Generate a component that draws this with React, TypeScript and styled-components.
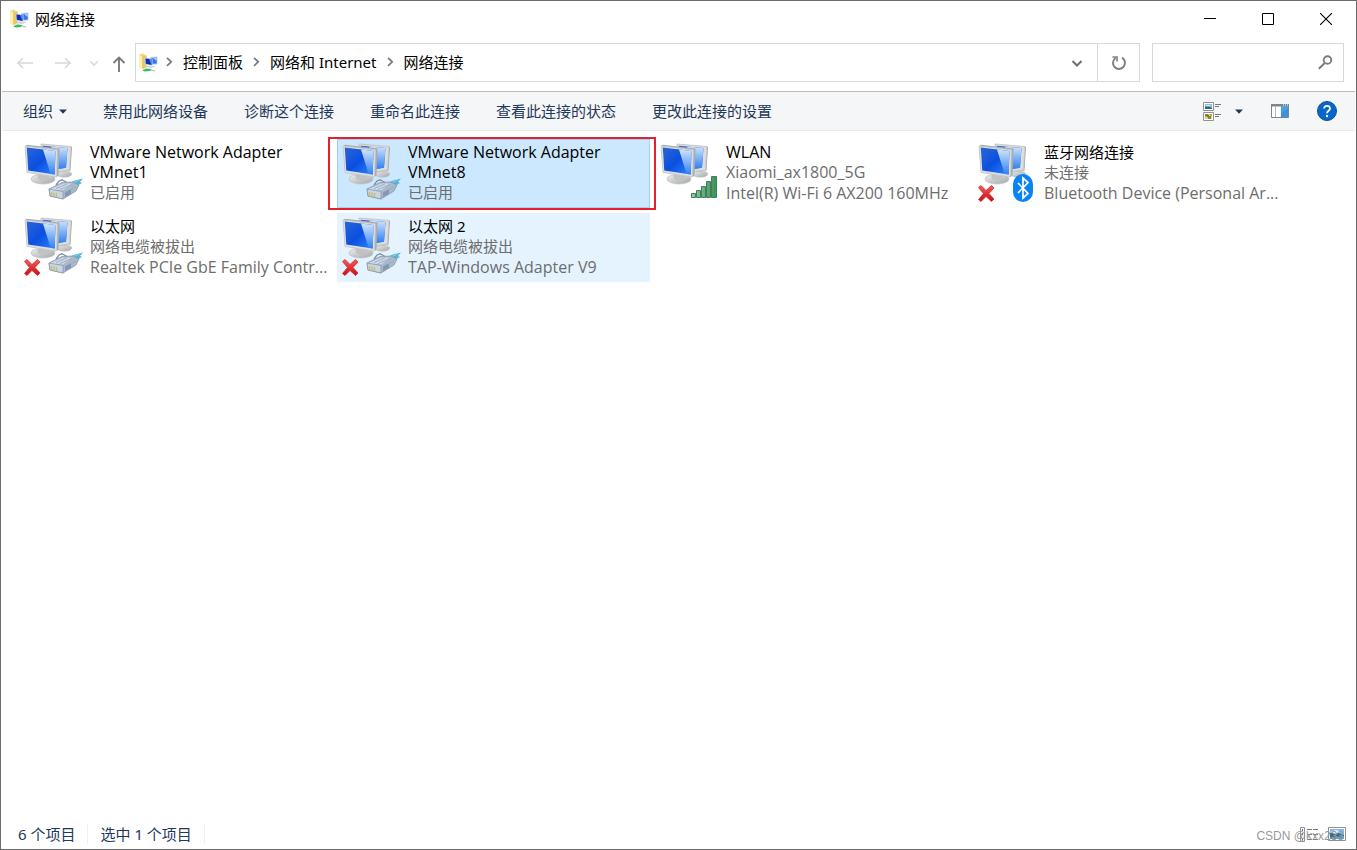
import React from "react";
import styled, { createGlobalStyle, css } from "styled-components";

const GlobalStyle = createGlobalStyle`
  *, *::before, *::after { box-sizing: border-box; }
  body { margin: 0; background: #fff; }
  body, button, input {
    font-family: "Noto Sans", "Noto Sans CJK SC", sans-serif;
    font-size: 15px;
    line-height: 20px;
  }
  svg { display: block; flex: none; }
`;

const plainButton = css`
  display: flex;
  align-items: center;
  justify-content: center;
  padding: 0;
  border: 0;
  background: none;
  color: inherit;
`;

const Window = styled.div`
  display: flex;
  flex-direction: column;
  min-height: 100vh;
  border: 1px solid #6b6b6b;
  background: #fff;
  color: #000;
`;

const TitleBar = styled.header`
  display: flex;
  align-items: stretch;
  height: 36px;
  padding: 0 1px 0 8px;
`;

const Title = styled.h1`
  display: flex;
  flex: 1;
  align-items: center;
  gap: 6px;
  margin: 0;
  font-size: 15px;
  font-weight: 400;
`;

const CaptionButton = styled.button`
  ${plainButton}
  width: 58px;
`;

const NavRow = styled.div`
  display: flex;
  align-items: stretch;
  height: 54px;
  padding: 6px 12px 9px 5px;
`;

const NavButton = styled.button<{ $width: number }>`
  ${plainButton}
  align-self: stretch;
  width: ${(p) => p.$width}px;
  color: #6f6f6f;
  &:disabled { color: #d9d9d9; }
`;

const AddressBar = styled.nav`
  display: flex;
  flex: 1;
  align-items: center;
  margin: 0 12px 0 3px;
  padding-left: 2px;
  border: 1px solid #d9d9d9;
`;

const Crumbs = styled.ol`
  display: flex;
  flex: 1;
  align-items: center;
  margin: 0;
  padding: 0 0 2px;
  list-style: none;
`;

const Crumb = styled.li`
  display: flex;
  align-items: center;
  svg { margin: 0 10px; }
  &:first-child svg { margin-left: 8px; }
`;

const CrumbLink = styled.a`
  color: #000;
  text-decoration: none;
`;

const RefreshButton = styled.button`
  ${plainButton}
  align-self: stretch;
  width: 42px;
  border-left: 1px solid #d9d9d9;
`;

const SearchBox = styled.label`
  display: flex;
  align-items: center;
  width: 192px;
  padding: 0 10px 0 8px;
  border: 1px solid #d9d9d9;
`;

const SearchInput = styled.input`
  flex: 1;
  min-width: 0;
  padding: 0;
  border: 0;
  outline: 0;
  background: none;
`;

const Toolbar = styled.div`
  display: flex;
  align-items: center;
  gap: 36px;
  height: 40px;
  margin: 0 1px;
  padding: 0 18px 0 21px;
  border-top: 1px solid #b9bcc0;
  border-bottom: 1px solid #e8eaec;
  background: #f5f6f7;
  color: #1e395b;
`;

const Command = styled.button`
  ${plainButton}
  gap: 6px;
`;

const ToolbarTools = styled.div`
  display: flex;
  align-items: center;
  gap: 28px;
  margin-left: auto;
`;

const ViewButton = styled.button`
  ${plainButton}
  gap: 13px;
`;

const IconButton = styled.button`
  ${plainButton}
`;

const Content = styled.main`
  flex: 1;
  padding: 8px 18px;
`;

const AdapterGrid = styled.ul`
  display: grid;
  grid-template-columns: repeat(auto-fill, 313px);
  gap: 5px;
  margin: 0;
  padding: 0;
  list-style: none;
`;

type ItemState = "normal" | "selected" | "hover";

const AdapterCell = styled.li`
  position: relative;
  display: flex;
`;

const AdapterTile = styled.button<{ $state: ItemState }>`
  ${plainButton}
  flex: 1;
  align-items: flex-start;
  justify-content: flex-start;
  gap: 6px;
  min-width: 0;
  height: 69px;
  text-align: left;
  background: ${(p) =>
    p.$state === "selected" ? "#cce8ff" : p.$state === "hover" ? "#e5f3ff" : "transparent"};
  box-shadow: ${(p) => (p.$state === "selected" ? "inset 0 0 0 1px #99d1ff" : "none")};
`;

const Highlight = styled.span`
  position: absolute;
  inset: -2px -6px -2px -9px;
  border: 2px solid #e3202b;
  pointer-events: none;
`;

const AdapterText = styled.span`
  display: flex;
  flex-direction: column;
  width: 232px;
  padding-top: 3px;
`;

const latinText = css`
  font-family: "Open Sans", "Noto Sans", sans-serif;
  font-size: 16px;
`;

const AdapterName = styled.span<{ $latin: boolean }>`
  line-height: 20px;
  ${(p) => p.$latin && latinText}
`;

const AdapterMeta = styled.span<{ $latin: boolean }>`
  color: #6d6d6d;
  line-height: 21px;
  white-space: nowrap;
  ${(p) => p.$latin && latinText}
`;

const StatusBar = styled.footer`
  display: flex;
  align-items: center;
  height: 30px;
  padding: 0 10px 0 17px;
  color: #1e395b;
`;

const StatusText = styled.span`
  margin-right: 12px;
  padding-right: 12px;
  border-right: 1px solid #f0f0f0;
`;

const ViewSwitch = styled.div`
  position: relative;
  display: flex;
  gap: 9px;
  margin-left: auto;
`;

const Watermark = styled.span`
  position: absolute;
  right: 2px;
  top: 0;
  color: #999;
  font-family: "Liberation Sans", Arial, sans-serif;
  font-size: 12px;
  line-height: 18px;
  white-space: nowrap;
`;

const FolderNetworkIcon = () => (
  <svg width="20" height="20" viewBox="0 0 20 20" aria-hidden="true">
    <path d="M1 2 4.500 .5 8.500 2.500V14L5.500 16 1 14z" fill="#f3d879" />
    <path d="M1 2 4 3.500V16L1 14z" fill="#fdf0b4" />
    <path d="M4 3.500 8.500 2.500V14L4.500 16z" fill="#e9c864" />
    <path d="M12 4 19.500 3.500V11.500L12 12z" fill="#c4d4e5" />
    <path d="M13 5 18.800 4.500V10.500L13 11z" fill="#3c73e8" />
    <path d="M15 5 18.800 4.500V8z" fill="#a7cbff" />
    <path d="M6.500 4.500 14.500 5.500V13L7 11.500z" fill="#c5d2e3" />
    <path d="M7.500 5.500 13.500 6.300V12L7.800 10.800z" fill="#0c2eb8" />
    <path d="M11 6 13.500 6.300V12z" fill="#4d93f5" />
    <path d="M8 12.500 14 13.500 16 12.500 17 13.500 13 15 7.500 14z" fill="#c8cdd2" />
    <path d="M4 17.500 8 15.500 13.500 16 12 18 7 18.500z" fill="#3bb86b" />
    <path d="M13 17 17 18" stroke="#9ebfae" strokeWidth="1" />
  </svg>
);

const ArrowIcon = ({ flip }: { flip?: boolean }) => (
  <svg width="16" height="12" viewBox="0 0 16 12" fill="none" stroke="currentColor" strokeWidth="1.6" aria-hidden="true">
    <path d={flip ? "M0 6h15M10 1l5 5-5 5" : "M16 6H1M6 1 1 6l5 5"} />
  </svg>
);

const UpIcon = () => (
  <svg width="14" height="18" viewBox="0 0 14 18" fill="none" stroke="#7a7a7a" strokeWidth="1.9" aria-hidden="true">
    <path d="M7 18V4M1.500 9 7 3.500 12.500 9" />
  </svg>
);

const DownChevron = ({ size, weight }: { size: number; weight: number }) => (
  <svg width={size} height={size} viewBox="0 0 12 12" fill="none" stroke="currentColor" strokeWidth={weight} aria-hidden="true">
    <path d="M1.500 4 6 8.500 10.500 4" />
  </svg>
);

const CrumbChevron = () => (
  <svg width="7" height="10" viewBox="0 0 7 10" fill="none" stroke="#777" strokeWidth="1.700" aria-hidden="true">
    <path d="M1 .8 5.200 4.800 1 8.800" />
  </svg>
);

const RefreshIcon = () => (
  <svg width="16" height="16" viewBox="0 0 16 16" fill="none" stroke="#808080" strokeWidth="2" aria-hidden="true">
    <path d="M11 2.700A6 6 0 1 1 4.500 3" />
    <path d="M1.500 2H6V6.500" strokeWidth="1.600" />
  </svg>
);

const SearchIcon = () => (
  <svg width="15" height="15" viewBox="0 0 15 15" fill="none" stroke="#7d7d7d" aria-hidden="true">
    <circle cx="9.500" cy="5" r="3.800" strokeWidth="1.900" />
    <path d="M6.800 8 .8 13.800" strokeWidth="2" />
  </svg>
);

const Caret = () => (
  <svg width="8" height="5" viewBox="0 0 8 5" aria-hidden="true">
    <path d="M0 .5h8L4 4.800z" fill="#1e395b" />
  </svg>
);

const TilesIcon = () => (
  <svg width="19" height="19" viewBox="0 0 19 19" aria-hidden="true">
    <path d="M.5.5h10v8H.5zM.5 10.500h10v8H.5z" fill="#fff" stroke="#929292" />
    <path d="M2 2h7v5H2z" fill="#87bdf0" />
    <path d="M2 4.500 5 4l4 2v1H2z" fill="#2e6875" />
    <path d="M2 3.500 6 3l2 .8-4 .8z" fill="#e8f4ff" />
    <path d="M2 12h7v5H2z" fill="#e0ca82" />
    <path d="M2 12h3v2.500H2zM5 14h3v3H5z" fill="#609a44" />
    <path d="M4 13h2v2H4z" fill="#c74d32" />
    <path d="M7 12h2v2H7z" fill="#e79b31" />
    <path d="M12 2.500h6M12 4.500h4M12 12.500h6M12 14.500h4" stroke="#777" />
  </svg>
);

const PreviewPaneIcon = () => (
  <svg width="18" height="14" viewBox="0 0 18 14" aria-hidden="true">
    <path d="M.5.500h17v13H.5z" fill="#fff" stroke="#7c858c" />
    <path d="M0 0h18v2.500H0z" fill="#7c858c" />
    <path d="M4.500 2.500v10.500" stroke="#b4b9bd" />
    <path d="M10 2h7v11h-7z" fill="#4da1e7" />
    <path d="M10 13V9l7-5v9z" fill="#3993df" />
    <path d="M12 1h1M14 1h1M16 1h1" stroke="#fff" />
  </svg>
);

const HelpIcon = () => (
  <svg width="20" height="20" viewBox="0 0 20 20" fill="none" aria-hidden="true">
    <circle cx="10" cy="10" r="9.500" fill="#0567cb" stroke="#164e87" />
    <path d="M7.200 7.600C7.200 4 13 4 13 7.500 13 9.800 10 9.700 10 12.300" stroke="#fff" strokeWidth="1.800" />
    <circle cx="10" cy="15" r="1.200" fill="#fff" />
  </svg>
);

type Badge = "plug" | "signal" | "bluetooth";

const PlugBadge = () => (
  <g>
    <path d="M50 44 56 41.500 64 39.500 61 43 63 44 54 49z" fill="#54b4d6" />
    <path d="M53 44 63 40 56 43.500z" fill="#b4e6f2" />
    <path d="M37 46 40 42 43 40.800 48 43.500" fill="none" stroke="#7d8fa7" strokeWidth="1.300" />
    <path d="M30 50 43 43.500 54 43 60 46 57 52 44 60 31 57z" fill="#a9b9cc" stroke="#8090a4" strokeWidth=".7" />
    <path d="M30 50 44 52.500V60L31 57z" fill="#c9d5e2" stroke="#8593a6" strokeWidth=".7" />
    <path d="M31.500 50 44 44.500 53 44.500 44 51.500z" fill="#ccd8e6" />
    <path d="M37 49.500 48 45M41 50.500 53 45.500M47 53 57 48" stroke="#95a8be" strokeWidth=".8" />
    <path d="M32.500 53v4M35 53.500v4M37.500 54v4" stroke="#c6bd6e" strokeWidth="1.400" />
    <path d="M46 53.500 52 50.500V55L46 58z" fill="#8596ae" />
  </g>
);

const SignalBadge = () => (
  <g fill="url(#signalGreen)" stroke="#3f8058">
    <path d="M36.500 54.500h4v4h-4zM41.500 51.500h4v7h-4zM46.500 47.500h4v11h-4zM51.500 42.500h4v16h-4zM56.500 37.500h5v21h-5z" />
  </g>
);

const BluetoothBadge = () => (
  <g>
    <rect x="40" y="35" width="20" height="28" rx="10" fill="#0a84f5" />
    <path d="M45 44 55 54.500 50 59V39l5 4.500L45 54" fill="none" stroke="#fff" strokeWidth="1.700" />
  </g>
);

const AdapterIcon = ({ badge, offline }: { badge: Badge; offline?: boolean }) => (
  <svg width="65" height="69" viewBox="0 0 65 69" aria-hidden="true">
    <defs>
      <linearGradient id="screenBlue" x1="0" y1="0" x2="1" y2="1">
        <stop offset="0" stopColor="#2b66d6" />
        <stop offset=".5" stopColor="#0b4fe0" />
        <stop offset="1" stopColor="#2d86ff" />
      </linearGradient>
      <linearGradient id="screenGlare" x1="0" y1="0" x2="0" y2="1">
        <stop offset="0" stopColor="#cfe4fb" />
        <stop offset="1" stopColor="#2f7ff2" />
      </linearGradient>
      <linearGradient id="standGrey" x1="0" y1="0" x2="1" y2="1">
        <stop offset="0" stopColor="#f0f0f0" />
        <stop offset="1" stopColor="#a3a5a7" />
      </linearGradient>
      <linearGradient id="signalGreen" x1="0" y1="0" x2="1" y2="0">
        <stop offset="0" stopColor="#8fcca0" />
        <stop offset="1" stopColor="#3c9158" />
      </linearGradient>
      <linearGradient id="crossRed" x1="0" y1="0" x2="0" y2="1">
        <stop offset="0" stopColor="#f35c5c" />
        <stop offset="1" stopColor="#c90d17" />
      </linearGradient>
    </defs>
    <ellipse cx="45" cy="35" rx="8" ry="3.500" fill="url(#standGrey)" />
    <path d="M50.500 31 52 7.500 53 8 51.500 31.500 37 34z" fill="#a5a7a9" />
    <path d="M22 5 52 7.500 50.500 31 37 33 23 30z" fill="#dcdddd" stroke="#bcbebf" strokeWidth=".8" />
    <path d="M23.800 6.800 48.500 9 47 28.800 39 30 24 28z" fill="url(#screenBlue)" />
    <path d="M32 7.500 48.500 9 47 28.800 39 30z" fill="url(#screenGlare)" />
    <ellipse cx="24" cy="40" rx="12" ry="5" fill="url(#standGrey)" stroke="#bdbfc1" strokeWidth=".7" />
    <path d="M18 33 31 36 29 41Q24 43 19 40z" fill="#c0c2c4" />
    <path d="M6 7 8 5.800 40.500 9.500 39.500 36.500 37.500 38 8 33.500z" fill="#a9abad" />
    <path d="M6 7 38.500 10.800 37.500 38 8 33.500z" fill="#dcdee0" stroke="#c5c7c9" strokeWidth=".7" />
    <path d="M7.800 8.500 36.500 12 35.700 35.500 9.300 31.500z" fill="url(#screenBlue)" />
    <path d="M24 10.500 36.500 12 35.700 35.500 31.500 34.800z" fill="url(#screenGlare)" />
    {badge === "plug" && <PlugBadge />}
    {badge === "signal" && <SignalBadge />}
    {badge === "bluetooth" && <BluetoothBadge />}
    {offline && (
      <path
        d="M5.500 48.500 8 46.500 13 51.500 18.500 46.500 21 49 16 54.500 21 60 18.500 62.500 13 57.500 8 62.500 5.500 60.500 10.500 54.500z"
        fill="url(#crossRed)"
        stroke="#d32c31"
        strokeWidth=".8"
      />
    )}
  </svg>
);

const DetailsIcon = () => (
  <svg width="19" height="15" viewBox="0 0 19 15" aria-hidden="true">
    <path d="M.5.500h4v14h-4z" fill="#fff" stroke="#909090" />
    <path d="M2 2h1v2H2z" fill="#387fbd" />
    <path d="M2 6h1v2H2z" fill="#2c5282" />
    <path d="M2 11h1v2H2z" fill="#c93434" />
    <path d="M7 2.500h5M13 2.500h5M7 7.500h5M13 7.500h5M7 12.500h5M13 12.500h5" stroke="#777" />
  </svg>
);

const LargeIconsIcon = () => (
  <svg width="18" height="15" viewBox="0 0 18 15" aria-hidden="true">
    <path d="M.5.500h17v13H.5z" fill="#fff" stroke="#909090" />
    <path d="M2 2h14v10H2z" fill="#80b7ee" />
    <path d="M2 6 8 5l8 3v4H2z" fill="#346f79" />
    <path d="M2 5 8 3l5 2-6 2z" fill="#e8f3fc" />
    <path d="M2 10 16 9v3H2z" fill="#6294d3" />
  </svg>
);

const crumbs = ["控制面板", "网络和 Internet", "网络连接"];

const commands = ["禁用此网络设备", "诊断这个连接", "重命名此连接", "查看此连接的状态", "更改此连接的设置"];

interface Adapter {
  name: string;
  meta: string[];
  badge: Badge;
  offline?: boolean;
  state?: ItemState;
}

const adapters: Adapter[] = [
  { name: "VMware Network Adapter VMnet1", meta: ["已启用"], badge: "plug" },
  { name: "VMware Network Adapter VMnet8", meta: ["已启用"], badge: "plug", state: "selected" },
  { name: "WLAN", meta: ["Xiaomi_ax1800_5G", "Intel(R) Wi-Fi 6 AX200 160MHz"], badge: "signal" },
  { name: "蓝牙网络连接", meta: ["未连接", "Bluetooth Device (Personal Ar..."], badge: "bluetooth", offline: true },
  { name: "以太网", meta: ["网络电缆被拔出", "Realtek PCIe GbE Family Contr..."], badge: "plug", offline: true },
  { name: "以太网 2", meta: ["网络电缆被拔出", "TAP-Windows Adapter V9"], badge: "plug", offline: true, state: "hover" },
];

const isLatin = (text: string) => /^[ -~]+$/.test(text);

export default function App() {
  return (
    <Window>
      <GlobalStyle />
      <TitleBar>
        <Title>
          <FolderNetworkIcon />
          网络连接
        </Title>
        <CaptionButton aria-label="最小化">
          <svg width="12" height="12" viewBox="0 0 12 12" stroke="#000"><path d="M0 5.500h12" /></svg>
        </CaptionButton>
        <CaptionButton aria-label="最大化">
          <svg width="12" height="12" viewBox="0 0 12 12" stroke="#000" fill="none"><path d="M.5.500h11v11H.5z" /></svg>
        </CaptionButton>
        <CaptionButton aria-label="关闭">
          <svg width="12" height="12" viewBox="0 0 12 12" stroke="#000" strokeWidth="1.100"><path d="M0 0 12 12M12 0 0 12" /></svg>
        </CaptionButton>
      </TitleBar>

      <NavRow>
        <NavButton $width={38} disabled aria-label="后退"><ArrowIcon /></NavButton>
        <NavButton $width={38} disabled aria-label="前进"><ArrowIcon flip /></NavButton>
        <NavButton $width={24} disabled aria-label="最近位置"><DownChevron size={10} weight={1.8} /></NavButton>
        <NavButton $width={26} aria-label="向上"><UpIcon /></NavButton>
        <AddressBar aria-label="地址">
          <FolderNetworkIcon />
          <Crumbs>
            {crumbs.map((label) => (
              <Crumb key={label}>
                <CrumbChevron />
                <CrumbLink href="#">{label}</CrumbLink>
              </Crumb>
            ))}
          </Crumbs>
          <NavButton $width={40} aria-label="以前的位置"><DownChevron size={12} weight={2} /></NavButton>
          <RefreshButton aria-label="刷新"><RefreshIcon /></RefreshButton>
        </AddressBar>
        <SearchBox>
          <SearchInput type="text" aria-label="搜索" />
          <SearchIcon />
        </SearchBox>
      </NavRow>

      <Toolbar>
        <Command>组织<Caret /></Command>
        {commands.map((label) => (
          <Command key={label}>{label}</Command>
        ))}
        <ToolbarTools>
          <ViewButton aria-label="更改视图"><TilesIcon /><Caret /></ViewButton>
          <IconButton aria-label="预览窗格"><PreviewPaneIcon /></IconButton>
          <IconButton aria-label="帮助"><HelpIcon /></IconButton>
        </ToolbarTools>
      </Toolbar>

      <Content>
        <AdapterGrid>
          {adapters.map((a) => (
            <AdapterCell key={a.name}>
              <AdapterTile $state={a.state ?? "normal"} aria-pressed={a.state === "selected"}>
                <AdapterIcon badge={a.badge} offline={a.offline} />
                <AdapterText>
                  <AdapterName $latin={isLatin(a.name)}>{a.name}</AdapterName>
                  {a.meta.map((line) => (
                    <AdapterMeta key={line} $latin={isLatin(line)}>{line}</AdapterMeta>
                  ))}
                </AdapterText>
              </AdapterTile>
              {a.state === "selected" && <Highlight />}
            </AdapterCell>
          ))}
        </AdapterGrid>
      </Content>

      <StatusBar>
        <StatusText>6 个项目</StatusText>
        <StatusText>选中 1 个项目</StatusText>
        <ViewSwitch>
          <IconButton aria-label="详细信息"><DetailsIcon /></IconButton>
          <IconButton aria-label="大图标"><LargeIconsIcon /></IconButton>
          <Watermark>CSDN @kxx233</Watermark>
        </ViewSwitch>
      </StatusBar>
    </Window>
  );
}
